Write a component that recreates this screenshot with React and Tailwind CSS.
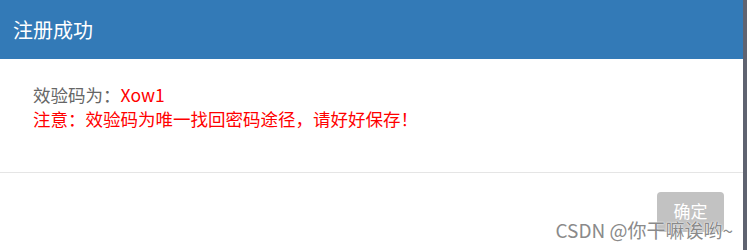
const SuccessDialog = ({ code }) => {
  return (
    <div className="relative flex h-[250px] w-full bg-white font-['Microsoft_YaHei','Noto_Sans_CJK_SC',sans-serif]">
      <div className="flex flex-1 flex-col">
        <div className="flex h-[59px] items-center bg-[#337ab7] px-[13px]">
          <h4 className="text-[20px] text-white">注册成功</h4>
        </div>

        <div className="h-[113px] px-[33px] pt-[24px] text-[17.5px] leading-[24px]">
          <p className="text-[#666]">
            效验码为：<span className="text-[#ff0000]">{code}</span>
          </p>
          <p className="text-[#ff0000]">注意：效验码为唯一找回密码途径，请好好保存！</p>
        </div>

        <div className="flex justify-end border-t border-[#e5e5e5] pr-[19px] pt-[19px]">
          <button className="h-[40px] w-[67px] rounded-[4px] bg-[#c2c2c2] pb-[2px] text-[17px] text-white">确定</button>
        </div>
      </div>

      <div className="w-[4px] bg-[#5f6370]" />

      <span className="absolute bottom-[6px] right-[14px] text-[19px] text-[#8a8a8a] [text-shadow:0_0_1px_#fff,0_0_2px_#fff]">
        CSDN @你干嘛诶哟~
      </span>
    </div>
  );
};

export default function App() {
  return <SuccessDialog code="Xow1" />;
}
